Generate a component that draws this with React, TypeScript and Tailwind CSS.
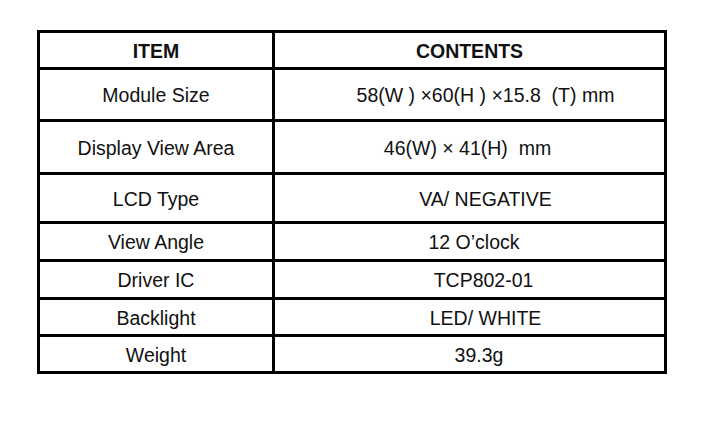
const rows = [
  { item: "Module Size", value: "58(W ) ×60(H ) ×15.8  (T) mm", row: "h-[52px] border-b-[3px]", shift: "pl-[32px]" },
  { item: "Display View Area", value: "46(W) × 41(H)  mm", row: "h-[53px] border-b-[3px]", shift: "pr-[4px]" },
  { item: "LCD Type", value: "VA/ NEGATIVE", row: "h-[49px] border-b-[3px]", shift: "pl-[32px]" },
  { item: "View Angle", value: "12 O’clock", row: "h-[38px] border-b-[3px]", shift: "pl-[9px]" },
  { item: "Driver IC", value: "TCP802-01", row: "h-[38px] border-b-[3px]", shift: "pl-[28px]" },
  { item: "Backlight", value: "LED/ WHITE", row: "h-[37px] border-b-[3px]", shift: "pl-[32px]" },
  { item: "Weight", value: "39.3g", row: "h-[34px]", shift: "pl-[19px]" },
]

export default function App() {
  return (
    <div className="min-h-screen w-[708px] h-[429px] bg-white pt-[30px] pl-[37px] font-['Liberation_Sans',Arial,sans-serif] text-[19.5px] text-[#111]">
      <div className="w-[630px] border-[3px] border-black">
        {/* header */}
        <div className="grid h-[37px] grid-cols-[235px_1fr] border-b-[3px] border-black font-bold">
          <div className="flex items-center justify-center border-r-[3px] border-black pt-[3px]">ITEM</div>
          <div className="flex items-center justify-center pt-[3px]">CONTENTS</div>
        </div>

        {rows.map((r) => (
          <div key={r.item} className={`grid grid-cols-[235px_1fr] border-black ${r.row}`}>
            <div className="flex items-center justify-center border-r-[3px] border-black pt-[3px]">{r.item}</div>
            <div className={`flex items-center justify-center whitespace-pre pt-[3px] ${r.shift}`}>{r.value}</div>
          </div>
        ))}
      </div>
    </div>
  )
}
